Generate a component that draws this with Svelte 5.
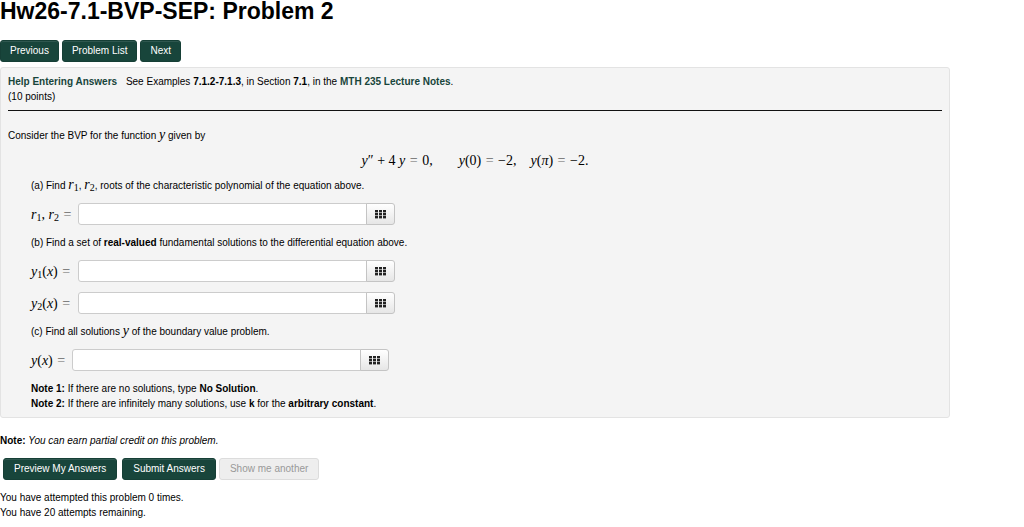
<script>
  const navLinks = ['Previous', 'Problem List', 'Next'];

  let answers = $state({ r: '', y1: '', y2: '', y: '' });
</script>

{#snippet answer(id, label)}
  <div class="answer">
    <input {id} type="text" aria-label={label} autocomplete="off" bind:value={answers[id]} />
    <button type="button" class="editor-btn" aria-label="Open equation editor for {label}">
      <svg width="11" height="9" viewBox="0 0 11 9" aria-hidden="true">
        {#each [0, 4, 8] as x}
          {#each [0, 3, 6] as y}
            <rect {x} {y} width="3" height="2.4" />
          {/each}
        {/each}
      </svg>
    </button>
  </div>
{/snippet}

<main>
  <h1>Hw26-7.1-BVP-SEP: Problem 2</h1>

  <nav>
    {#each navLinks as link}
      <a class="btn" href="#{link.replace(' ', '-').toLowerCase()}">{link}</a>
    {/each}
  </nav>

  <section class="problem">
    <p>
      <a class="help" href="#help">Help Entering Answers</a>
      See Examples <b>7.1.2-7.1.3</b>, in Section <b>7.1</b>, in the
      <a href="#notes">MTH 235 Lecture Notes</a>.<br />
      (10 points)
    </p>
    <hr />

    <p>Consider the BVP for the function <span class="math"><i>y</i></span> given by</p>

    <div class="equation math">
      <span><i>y</i>″ + 4 <i>y</i> <span class="eq">=</span> 0,</span>
      <span class="condition"><i>y</i>(0) <span class="eq">=</span> −2,</span>
      <span><i>y</i>(<i>π</i>) <span class="eq">=</span> −2.</span>
    </div>

    <div class="parts">
      <p>
        (a) Find <span class="math"><i>r</i><sub>1</sub></span>,
        <span class="math"><i>r</i><sub>2</sub></span>, roots of the characteristic polynomial of the equation above.
      </p>
      <div class="row">
        <label class="math" for="r"><i>r</i><sub>1</sub>, <i>r</i><sub>2</sub> <span class="eq">=</span></label>
        {@render answer('r', 'r1, r2')}
      </div>

      <p>(b) Find a set of <b>real-valued</b> fundamental solutions to the differential equation above.</p>
      <div class="row">
        <label class="math" for="y1"><i>y</i><sub>1</sub>(<i>x</i>) <span class="eq">=</span></label>
        {@render answer('y1', 'y1(x)')}
      </div>
      <div class="row">
        <label class="math" for="y2"><i>y</i><sub>2</sub>(<i>x</i>) <span class="eq">=</span></label>
        {@render answer('y2', 'y2(x)')}
      </div>

      <p>(c) Find all solutions <span class="math"><i>y</i></span> of the boundary value problem.</p>
      <div class="row">
        <label class="math short" for="y"><i>y</i>(<i>x</i>) <span class="eq">=</span></label>
        {@render answer('y', 'y(x)')}
      </div>

      <p>
        <b>Note 1:</b> If there are no solutions, type <b>No Solution</b>.<br />
        <b>Note 2:</b> If there are infinitely many solutions, use <b>k</b> for the <b>arbitrary constant</b>.
      </p>
    </div>
  </section>

  <p class="credit"><b>Note:</b> <em>You can earn partial credit on this problem.</em></p>

  <div class="actions">
    <button type="button" class="btn">Preview My Answers</button>
    <button type="button" class="btn submit">Submit Answers</button>
    <button type="button" class="btn" disabled>Show me another</button>
  </div>

  <p>You have attempted this problem 0 times.<br />You have 20 attempts remaining.</p>
</main>

<style>
  :global(body) {
    background: #fff;
  }

  main {
    padding-right: 74px;
    font: 10px/15px "Liberation Sans", Arial, sans-serif;
    color: #000;
  }

  h1 {
    margin: 0 0 18px;
    font-size: 23px;
    line-height: 22px;
    font-weight: bold;
  }

  p {
    margin: 0;
  }

  a {
    color: #18453b;
    font-weight: bold;
    text-decoration: none;
  }

  nav {
    display: flex;
    gap: 3px;
    margin-bottom: 5px;
  }

  .btn {
    box-sizing: border-box;
    height: 22px;
    padding: 0 9px;
    border: 1px solid #163f36;
    border-radius: 3px;
    background: #18453b;
    box-shadow: inset 0 1px 0 rgba(255, 255, 255, 0.1);
    color: #fff;
    font: 10px/20px "Liberation Sans", Arial, sans-serif;
  }

  .btn:disabled {
    border-color: #dcdcdc;
    background: #eee;
    color: #999;
  }

  /* Problem panel */
  .problem {
    padding: 6px 7px;
    border: 1px solid #e3e3e3;
    border-radius: 3px;
    background: #f4f4f4;
  }

  .help {
    margin-right: 6px;
  }

  hr {
    margin: 6px 0 17px;
    border: 0;
    border-top: 1px solid #111;
  }

  .math {
    font-family: "Liberation Serif", "Times New Roman", serif;
    font-size: 14px;
    line-height: 15px;
  }

  p .math {
    line-height: 0;
  }

  .math sub {
    font-size: 10px;
    line-height: 0;
    vertical-align: -2px;
  }

  .equation {
    display: flex;
    justify-content: center;
    gap: 14px;
    margin: 10px 0;
  }

  .condition {
    margin-left: 12px;
  }

  .parts {
    padding-left: 23px;
  }

  .row {
    display: flex;
    align-items: center;
    margin: 10px 0;
  }

  .row label {
    width: 47px;
    white-space: nowrap;
  }

  .row label.short {
    width: 41px;
  }

  .eq {
    margin: 0 1px;
    color: #666;
  }

  /* Answer box with the equation editor button */
  .answer {
    display: flex;
    height: 22px;
  }

  .answer input {
    box-sizing: border-box;
    width: 289px;
    padding: 0 5px;
    border: 1px solid #ccc;
    border-radius: 3px 0 0 3px;
    background: #fff;
    font: inherit;
  }

  .editor-btn {
    display: flex;
    align-items: center;
    justify-content: center;
    box-sizing: border-box;
    width: 29px;
    margin-left: -1px;
    padding: 0;
    border: 1px solid #c4c4c4;
    border-radius: 0 3px 3px 0;
    background: linear-gradient(#fff, #e6e6e6);
    fill: #222;
  }

  .credit {
    margin: 15px 0 10px;
  }

  .actions {
    display: flex;
    gap: 3px;
    margin: 0 3px 10px;
  }

  .actions .btn {
    padding: 0 10px;
  }

  .submit {
    margin-left: 2px;
  }
</style>
